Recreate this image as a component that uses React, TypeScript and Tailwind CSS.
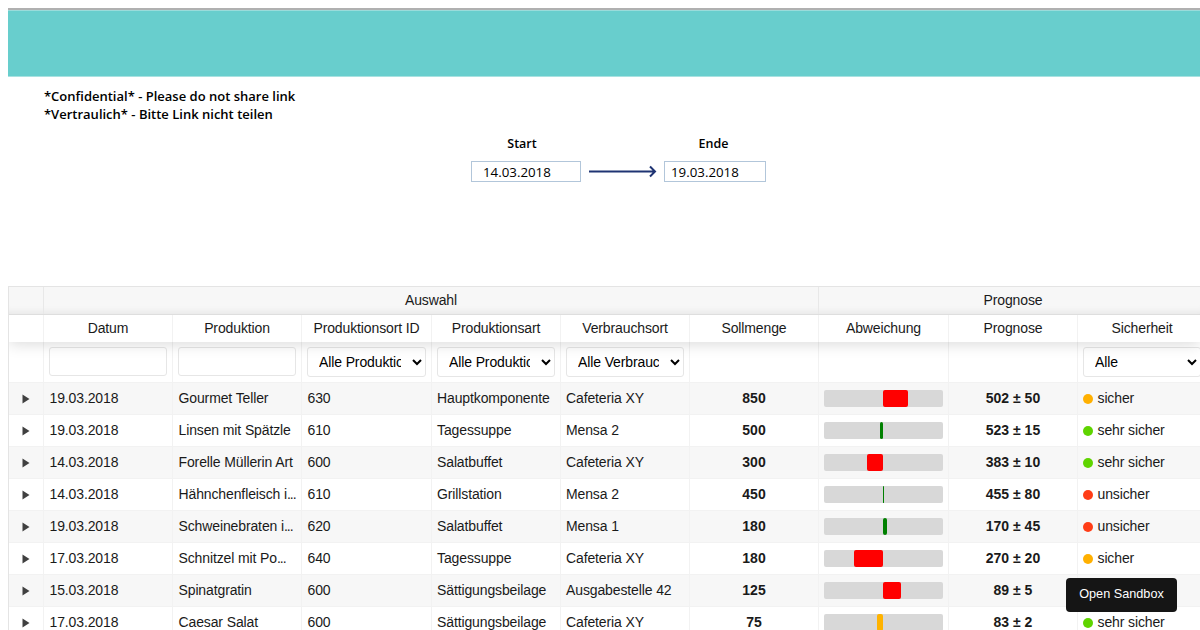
const cols = [129, 129, 130, 129, 129, 129, 130, 129, 129];

type Row = {
  d: string; p: string; cut?: boolean; o: string; a: string; v: string; s: string;
  left: number; width: number; color: string; pr: string; si: string; dot: string;
};

const RED = "#ff0000", GREEN = "#008000", AMBER = "#ffb300";
const DOT_G = "#5fd400", DOT_A = "#ffb000", DOT_R = "#ff3d17";

const rows: Row[] = [
  { d: "19.03.2018", p: "Gourmet Teller", o: "630", a: "Hauptkomponente", v: "Cafeteria XY", s: "850", left: 59, width: 25, color: RED, pr: "502 ± 50", si: "sicher", dot: DOT_A },
  { d: "19.03.2018", p: "Linsen mit Spätzle", o: "610", a: "Tagessuppe", v: "Mensa 2", s: "500", left: 56, width: 3, color: GREEN, pr: "523 ± 15", si: "sehr sicher", dot: DOT_G },
  { d: "14.03.2018", p: "Forelle Müllerin Art", o: "600", a: "Salatbuffet", v: "Cafeteria XY", s: "300", left: 43, width: 16, color: RED, pr: "383 ± 10", si: "sehr sicher", dot: DOT_G },
  { d: "14.03.2018", p: "Hähnchenfleisch i", cut: true, o: "610", a: "Grillstation", v: "Mensa 2", s: "450", left: 59, width: 1, color: GREEN, pr: "455 ± 80", si: "unsicher", dot: DOT_R },
  { d: "19.03.2018", p: "Schweinebraten i", cut: true, o: "620", a: "Salatbuffet", v: "Mensa 1", s: "180", left: 59, width: 4, color: GREEN, pr: "170 ± 45", si: "unsicher", dot: DOT_R },
  { d: "17.03.2018", p: "Schnitzel mit Po", cut: true, o: "640", a: "Tagessuppe", v: "Cafeteria XY", s: "180", left: 30, width: 29, color: RED, pr: "270 ± 20", si: "sicher", dot: DOT_A },
  { d: "15.03.2018", p: "Spinatgratin", o: "600", a: "Sättigungsbeilage", v: "Ausgabestelle 42", s: "125", left: 59, width: 18, color: RED, pr: "89 ± 5", si: "sehr sicher", dot: DOT_G },
  { d: "17.03.2018", p: "Caesar Salat", o: "600", a: "Sättigungsbeilage", v: "Cafeteria XY", s: "75", left: 53, width: 6, color: AMBER, pr: "83 ± 2", si: "sehr sicher", dot: DOT_G },
];

const cellB = "border-r border-[#f2f2f2] shrink-0";

function Head({ label, w }: { label: string; w: number }) {
  return (
    <div style={{ width: w }} className={`${cellB} flex items-center justify-center h-full`}>
      {label}
    </div>
  );
}

function Sel({ label, w }: { label: string; w: number }) {
  return (
    <div style={{ width: w }} className={`${cellB} h-full px-[5px] pt-[5px]`}>
      <select defaultValue="x" className="w-full h-[30px] bg-white border border-[#e6e6e6] rounded-[3px] pl-[7px] pr-[8px] text-[14px] text-black outline-none [font-family:'Liberation_Sans',sans-serif]">
        <option value="x">{label}</option>
      </select>
    </div>
  );
}

function Inp({ w }: { w: number }) {
  return (
    <div style={{ width: w }} className={`${cellB} h-full px-[5px] pt-[5px]`}>
      <input className="w-full h-[29px] bg-white border border-[#e6e6e6] rounded-[3px]" />
    </div>
  );
}

function Blank({ w }: { w: number }) {
  return <div style={{ width: w }} className={`${cellB} h-full`} />;
}

function DataRow({ r, i }: { r: Row; i: number }) {
  return (
    <div className={`flex h-[32px] border-b border-[#f2f2f2] items-center ${i % 2 === 0 ? "bg-[#f7f7f7]" : "bg-white"}`}>
      <div className={`${cellB} w-[35px] h-full flex items-center justify-center`}>
        <svg width="8" height="10" viewBox="0 0 8 10" className="mt-[1px]">
          <path d="M0.5 0.5 L7.5 5 L0.5 9.5 Z" fill="#404040" />
        </svg>
      </div>
      <div style={{ width: cols[0] }} className={`${cellB} h-full flex items-center pl-[5.5px] whitespace-nowrap`}>{r.d}</div>
      <div style={{ width: cols[1] }} className={`${cellB} h-full flex items-center pl-[5.5px] whitespace-nowrap`}>
        <span>
          {r.p}
          {r.cut ? <span className="tracking-[-1px]">...</span> : null}
        </span>
      </div>
      <div style={{ width: cols[2] }} className={`${cellB} h-full flex items-center pl-[5.5px]`}>{r.o}</div>
      <div style={{ width: cols[3] }} className={`${cellB} h-full flex items-center pl-[5px] whitespace-nowrap`}>{r.a}</div>
      <div style={{ width: cols[4] }} className={`${cellB} h-full flex items-center pl-[5px] whitespace-nowrap`}>{r.v}</div>
      <div style={{ width: cols[5] }} className={`${cellB} h-full flex items-center justify-center font-bold tracking-normal`}>{r.s}</div>
      <div style={{ width: cols[6] }} className={`${cellB} h-full flex items-center px-[5px]`}>
        <div className="relative w-[119px] h-[17px] rounded-[2px] bg-[#d8d8d8]">
          <div
            style={{ left: r.left, width: r.width, background: r.color }}
            className="absolute top-0 bottom-0 rounded-[2px]"
          />
        </div>
      </div>
      <div style={{ width: cols[7] }} className={`${cellB} h-full flex items-center justify-center font-bold tracking-normal`}>{r.pr}</div>
      <div style={{ width: cols[8] }} className="shrink-0 h-full flex items-center pl-[5px] gap-[4.5px] whitespace-nowrap">
        <span style={{ background: r.dot }} className="w-[10px] h-[10px] rounded-full shrink-0" />
        {r.si}
      </div>
    </div>
  );
}

export default function App() {
  return (
    <div className="relative w-[1200px] h-[630px] overflow-hidden bg-white pl-2 pt-2 text-[14px] text-[#1a1a1a] [font-family:'Liberation_Sans',sans-serif]">
      {/* Banner image area */}
      <div className="h-[278px] flex flex-col [font-family:'Open_Sans',sans-serif]">
        <div className="h-[2px] bg-[#b0b0b0]" />
        <div className="h-[1px] bg-[#9adcdb]" />
        <div className="h-[65px] bg-[#68cecd]" />
        <div className="h-[1px] bg-[#a8e2e1]" />
        <div className="pl-[36px] pt-[10px] text-[13px] leading-[18px] font-semibold text-black">
          <div>*Confidential* - Please do not share link</div>
          <div>*Vertraulich* - Bitte Link nicht teilen</div>
        </div>
        <div className="flex pl-[463px] pt-[12px] text-[12.5px] text-black">
          <div className="w-[110px] flex flex-col items-center">
            <div className="font-semibold h-[18px] leading-[18px] pr-[8px]">Start</div>
            <div className="mt-[8px] w-[110px] h-[21px] border border-[#b2c6da] pl-[11px] leading-[20px] text-[13.3px]">14.03.2018</div>
          </div>
          <svg width="70" height="21" viewBox="0 0 70 21" className="mt-[26px] ml-[7px] mr-[6px]">
            <path d="M1 10.5 H67 M62 5.5 L67 10.5 L62 15.5" fill="none" stroke="#1f3473" strokeWidth="2" />
          </svg>
          <div className="w-[102px] flex flex-col items-center">
            <div className="font-semibold h-[18px] leading-[18px] pr-[3px]">Ende</div>
            <div className="mt-[8px] w-[102px] h-[21px] border border-[#b2c6da] pl-[6px] leading-[20px] text-[13.3px]">19.03.2018</div>
          </div>
        </div>
      </div>

      {/* Table */}
      <div className="w-[1192px] overflow-hidden border-l border-t border-[#e4e4e4] tracking-[-0.12px]">
        <div className="relative z-[2] flex h-[28px] bg-[#f7f7f7] shadow-[inset_0_-8px_7px_-6px_rgba(0,0,0,0.07)] border-b border-[#dedede]">
          <div className="w-[35px] shrink-0 border-r border-[#e8e8e8]" />
          <div className="w-[775px] shrink-0 border-r border-[#e8e8e8] flex items-center justify-center">Auswahl</div>
          <div className="w-[388px] shrink-0 flex items-center justify-center">Prognose</div>
        </div>
        <div className="relative z-[1] flex h-[27px] bg-white shadow-[0_2px_15px_0_rgba(0,0,0,0.15)]">
          <div className={`${cellB} w-[35px]`} />
          <Head label="Datum" w={cols[0]} />
          <Head label="Produktion" w={cols[1]} />
          <Head label="Produktionsort ID" w={cols[2]} />
          <Head label="Produktionsart" w={cols[3]} />
          <Head label="Verbrauchsort" w={cols[4]} />
          <Head label="Sollmenge" w={cols[5]} />
          <Head label="Abweichung" w={cols[6]} />
          <Head label="Prognose" w={cols[7]} />
          <Head label="Sicherheit" w={cols[8]} />
        </div>
        <div className="flex h-[41px] bg-white border-b border-[#f2f2f2]">
          <Blank w={35} />
          <Inp w={cols[0]} />
          <Inp w={cols[1]} />
          <Sel label="Alle Produktionsorte" w={cols[2]} />
          <Sel label="Alle Produktionsarten" w={cols[3]} />
          <Sel label="Alle Verbrauchsorte" w={cols[4]} />
          <Blank w={cols[5]} />
          <Blank w={cols[6]} />
          <Blank w={cols[7]} />
          <div className="h-full pl-[5px] pt-[5px] w-[129px] shrink-0">
            <select defaultValue="x" className="w-[118px] h-[30px] bg-white border border-[#e6e6e6] rounded-[3px] pl-[7px] text-[14px] text-black outline-none [font-family:'Liberation_Sans',sans-serif]">
              <option value="x">Alle</option>
            </select>
          </div>
        </div>
        {rows.map((r, i) => (
          <DataRow key={i} r={r} i={i} />
        ))}
      </div>

      {/* Tooltip */}
      <div className="absolute left-[1066px] top-[578px] w-[111px] h-[34px] rounded-[4px] bg-[#151515] text-white text-[12.7px] flex items-center justify-center">
        Open Sandbox
      </div>
    </div>
  );
}
